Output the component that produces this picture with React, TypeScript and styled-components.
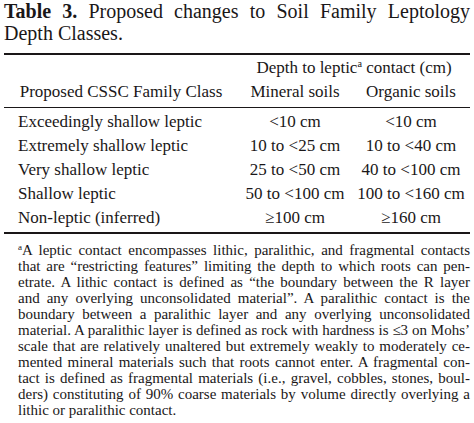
import React from 'react';
import styled, { createGlobalStyle } from 'styled-components';

const GlobalStyle = createGlobalStyle`
    body {
        margin: 0;
        background: #fff;
    }
`;

interface Row {
    name: string,
    mineral: string,
    organic: string
}

const rows: Row[] = [
    { name: 'Exceedingly shallow leptic', mineral: '<10 cm', organic: '<10 cm' },
    { name: 'Extremely shallow leptic', mineral: '10 to <25 cm', organic: '10 to <40 cm' },
    { name: 'Very shallow leptic', mineral: '25 to <50 cm', organic: '40 to <100 cm' },
    { name: 'Shallow leptic', mineral: '50 to <100 cm', organic: '100 to <160 cm' },
    { name: 'Non-leptic (inferred)', mineral: '≥100 cm', organic: '≥160 cm' },
];

// footnote lines, broken as in the print
const noteLines = (): React.ReactNode[] => [
    <><Sup>a</Sup>A leptic contact encompasses lithic, paralithic, and fragmental contacts</>,
    'that are “restricting features” limiting the depth to which roots can pen-',
    'etrate. A lithic contact is defined as “the boundary between the R layer',
    'and any overlying unconsolidated material”. A paralithic contact is the',
    'boundary between a paralithic layer and any overlying unconsolidated',
    'material. A paralithic layer is defined as rock with hardness is ≤3 on Mohs’',
    'scale that are relatively unaltered but extremely weakly to moderately ce-',
    'mented mineral materials such that roots cannot enter. A fragmental con-',
    'tact is defined as fragmental materials (i.e., gravel, cobbles, stones, boul-',
    'ders) constituting of 90% coarse materials by volume directly overlying a',
    'lithic or paralithic contact.',
];

export default function App() {
    const note = noteLines();
    return (
        <Page>
            <GlobalStyle />
            <Caption>
                <Line $fill><Label>Table 3.</Label> Proposed changes to Soil Family Leptology</Line>
                <Line>Depth Classes.</Line>
            </Caption>
            <Table>
                <colgroup>
                    <col style={{ width: 234 }} />
                    <col style={{ width: 114 }} />
                    <col style={{ width: 118 }} />
                </colgroup>
                <thead>
                    <tr>
                        <HeadCell rowSpan={2} $ruled>Proposed CSSC Family Class</HeadCell>
                        <HeadCell colSpan={2} $top>Depth to leptic<Sup>a</Sup> contact (cm)</HeadCell>
                    </tr>
                    <tr>
                        <HeadCell $ruled>Mineral soils</HeadCell>
                        <HeadCell $ruled>Organic soils</HeadCell>
                    </tr>
                </thead>
                <tbody>
                    {rows.map((r, i) => (
                        <tr key={r.name}>
                            <NameCell $first={i === 0} $last={i === rows.length - 1}>{r.name}</NameCell>
                            <Cell $first={i === 0} $last={i === rows.length - 1}>{r.mineral}</Cell>
                            <Cell $first={i === 0} $last={i === rows.length - 1}>{r.organic}</Cell>
                        </tr>
                    ))}
                </tbody>
            </Table>
            <Footnote>
                {note.map((text, i) => (
                    <Line key={i} $fill={i < note.length - 1}>{text}</Line>
                ))}
            </Footnote>
        </Page>
    );
}

const Page = styled.div`
    width: 466px;
    padding: 0 4px;
    color: #1a1718;
    font-family: "Liberation Serif", "Times New Roman", serif;
`;

const Caption = styled.div`
    font-size: 20px;
    line-height: 22px;
`;

const Line = styled.div<{ $fill?: boolean }>`
    text-align: justify;
    text-align-last: ${({ $fill }) => $fill ? 'justify' : 'left'};
`;

const Label = styled.b`
    font-weight: 700;
`;

const Sup = styled.sup`
    font-size: 0.6em;
    line-height: 0;
    vertical-align: 0.55em;
`;

const Table = styled.table`
    width: 466px;
    margin-top: 9px;
    border-collapse: collapse;
    table-layout: fixed;
    border-top: 2px solid #1a1718;
    border-bottom: 2px solid #1a1718;
    font-size: 17px;
    line-height: 24px;
`;

const HeadCell = styled.th<{ $ruled?: boolean, $top?: boolean }>`
    padding: ${({ $top }) => $top ? '1px 0 0' : '0 0 3px'};
    font-weight: 400;
    text-align: center;
    vertical-align: bottom;
    white-space: nowrap;
    border-bottom: ${({ $ruled }) => $ruled ? '1.5px solid #1a1718' : 'none'};
`;

const Cell = styled.td<{ $first?: boolean, $last?: boolean }>`
    padding: ${({ $first, $last }) => `${$first ? 2 : 0}px 0 ${$last ? 2 : 0}px`};
    text-align: center;
    white-space: nowrap;
`;

const NameCell = styled(Cell)`
    padding-left: 14px;
    text-align: left;
`;

const Footnote = styled.div`
    margin-top: 8px;
    padding-left: 14px;
    font-size: 15px;
    line-height: 16px;
`;
